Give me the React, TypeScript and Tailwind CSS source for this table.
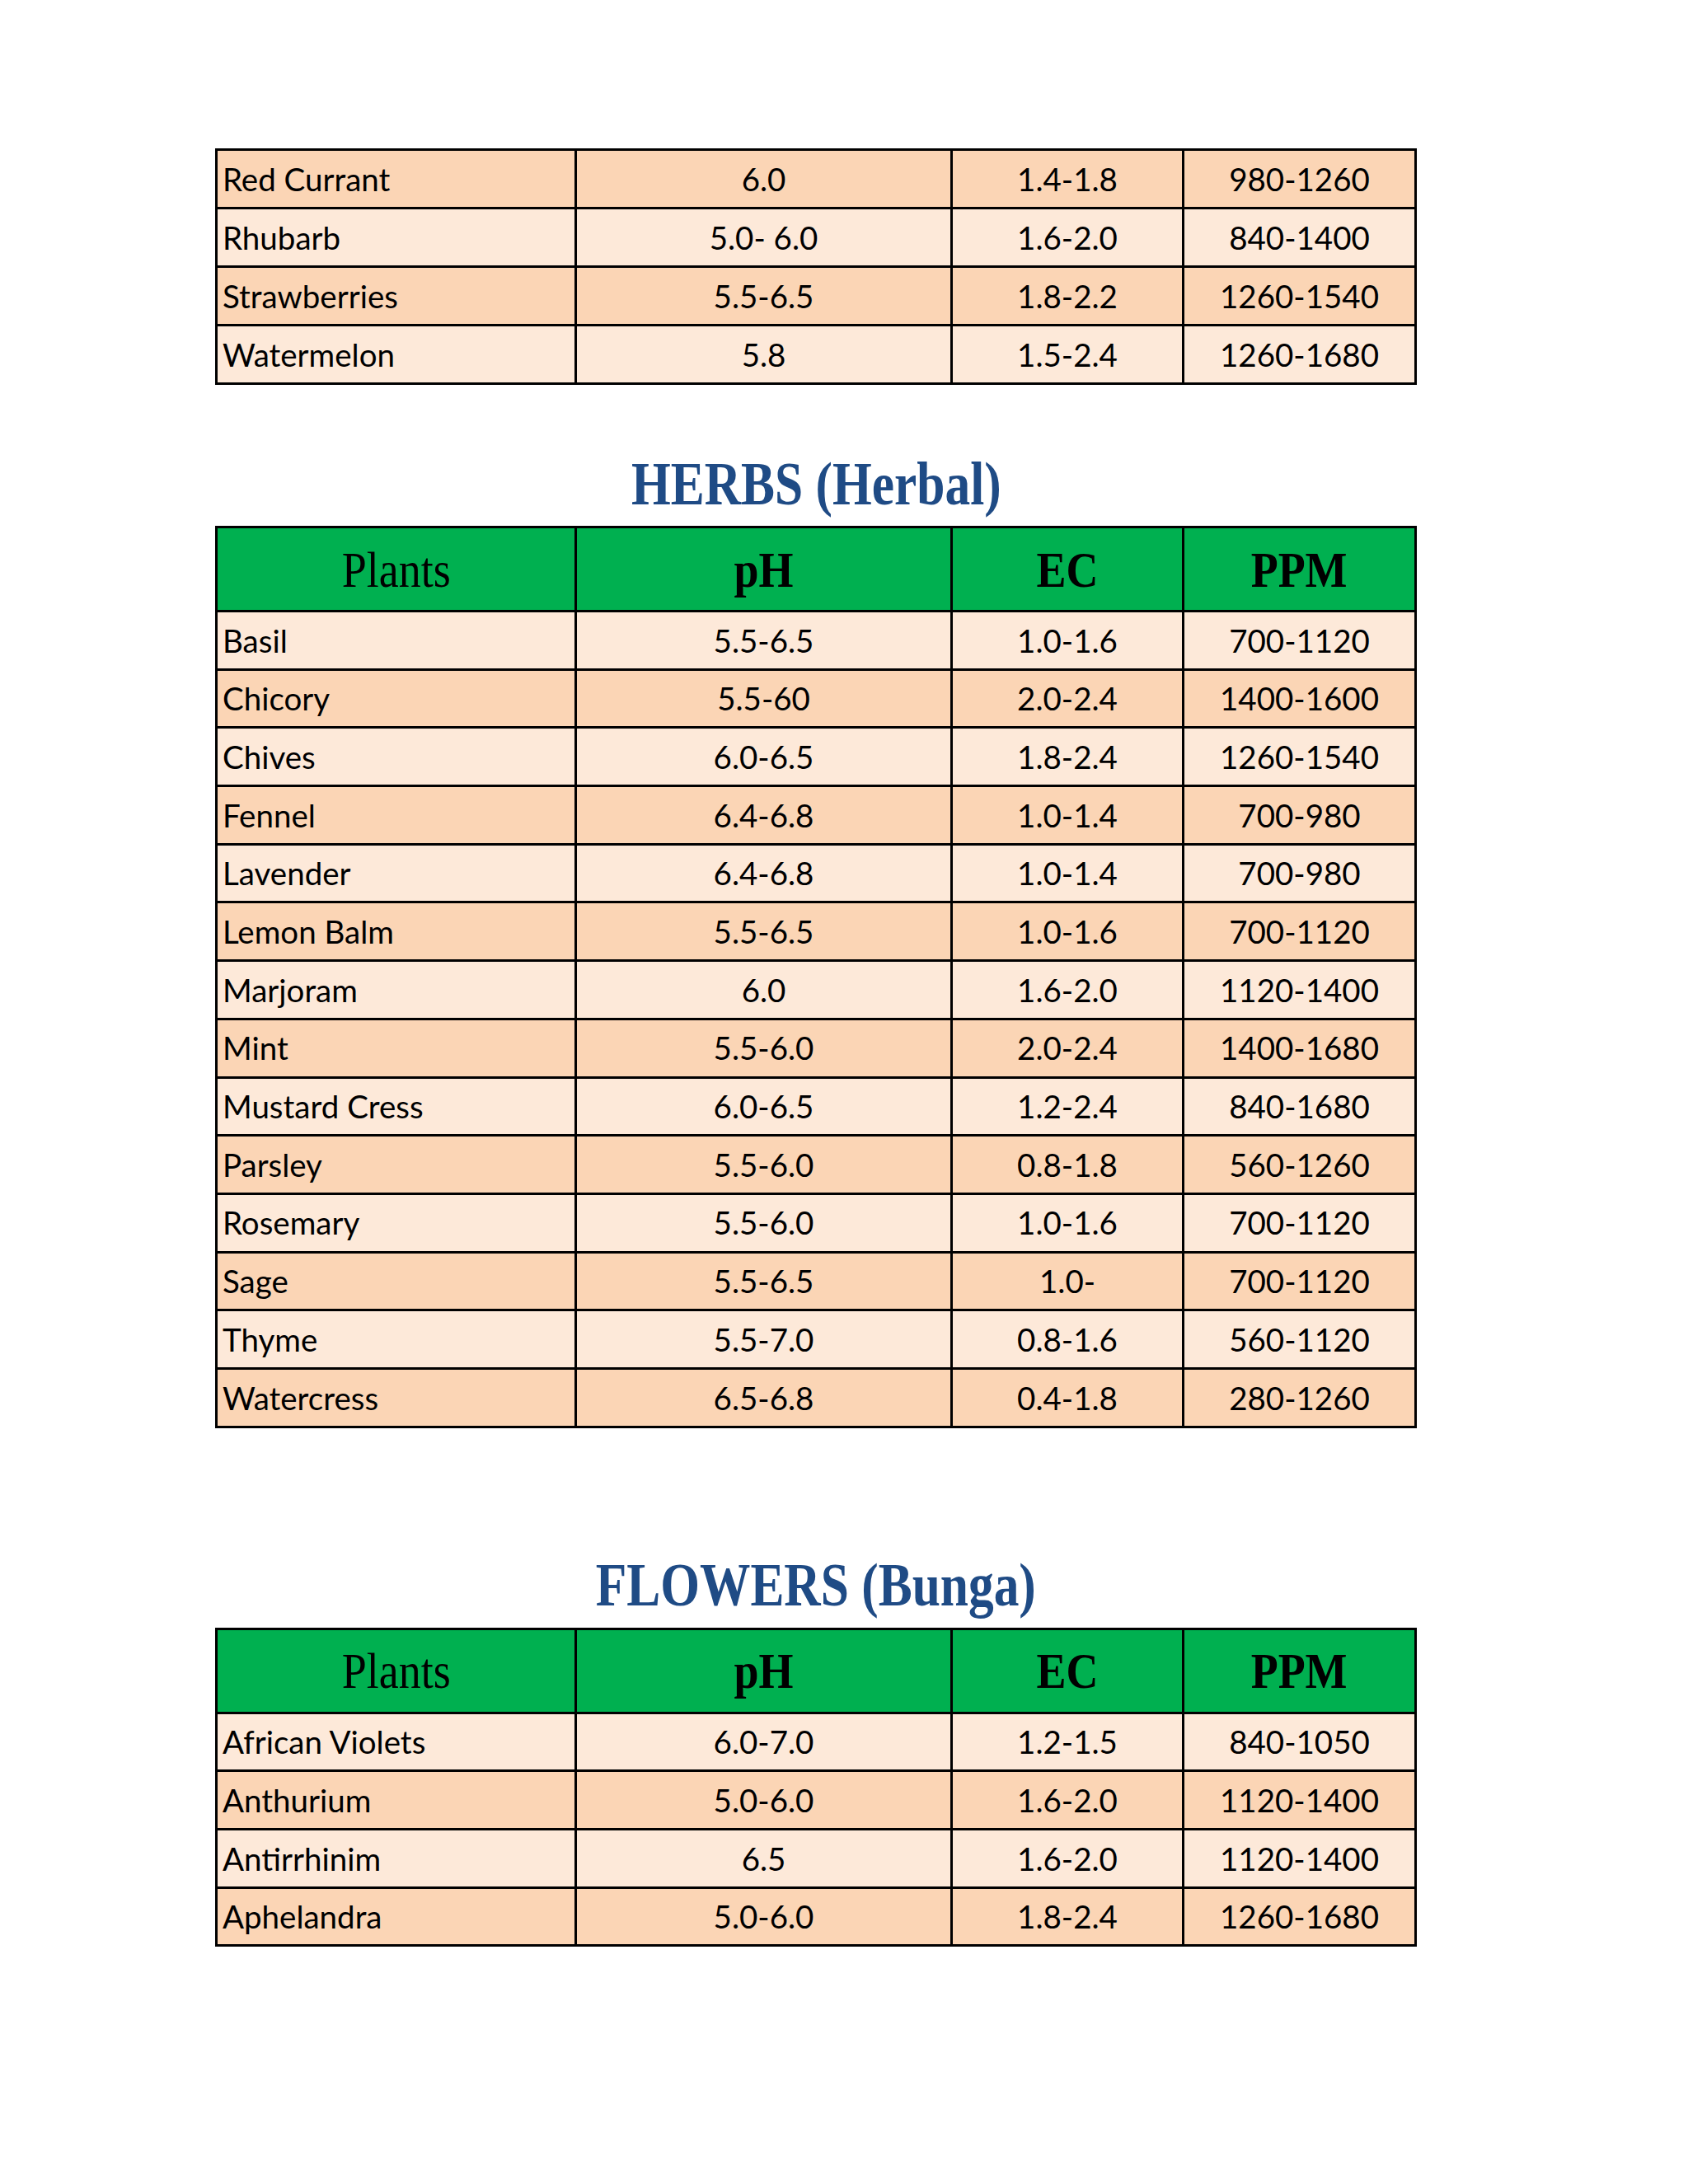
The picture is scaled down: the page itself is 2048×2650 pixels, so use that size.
import React from "react";

interface PlantRow {
  name: string;
  ph: string;
  ec: string;
  ppm: string;
}

const fruits: PlantRow[] = [
  { name: "Red Currant", ph: "6.0", ec: "1.4-1.8", ppm: "980-1260" },
  { name: "Rhubarb", ph: "5.0- 6.0", ec: "1.6-2.0", ppm: "840-1400" },
  { name: "Strawberries", ph: "5.5-6.5", ec: "1.8-2.2", ppm: "1260-1540" },
  { name: "Watermelon", ph: "5.8", ec: "1.5-2.4", ppm: "1260-1680" },
];

const herbs: PlantRow[] = [
  { name: "Basil", ph: "5.5-6.5", ec: "1.0-1.6", ppm: "700-1120" },
  { name: "Chicory", ph: "5.5-60", ec: "2.0-2.4", ppm: "1400-1600" },
  { name: "Chives", ph: "6.0-6.5", ec: "1.8-2.4", ppm: "1260-1540" },
  { name: "Fennel", ph: "6.4-6.8", ec: "1.0-1.4", ppm: "700-980" },
  { name: "Lavender", ph: "6.4-6.8", ec: "1.0-1.4", ppm: "700-980" },
  { name: "Lemon Balm", ph: "5.5-6.5", ec: "1.0-1.6", ppm: "700-1120" },
  { name: "Marjoram", ph: "6.0", ec: "1.6-2.0", ppm: "1120-1400" },
  { name: "Mint", ph: "5.5-6.0", ec: "2.0-2.4", ppm: "1400-1680" },
  { name: "Mustard Cress", ph: "6.0-6.5", ec: "1.2-2.4", ppm: "840-1680" },
  { name: "Parsley", ph: "5.5-6.0", ec: "0.8-1.8", ppm: "560-1260" },
  { name: "Rosemary", ph: "5.5-6.0", ec: "1.0-1.6", ppm: "700-1120" },
  { name: "Sage", ph: "5.5-6.5", ec: "1.0-", ppm: "700-1120" },
  { name: "Thyme", ph: "5.5-7.0", ec: "0.8-1.6", ppm: "560-1120" },
  { name: "Watercress", ph: "6.5-6.8", ec: "0.4-1.8", ppm: "280-1260" },
];

const flowers: PlantRow[] = [
  { name: "African Violets", ph: "6.0-7.0", ec: "1.2-1.5", ppm: "840-1050" },
  { name: "Anthurium", ph: "5.0-6.0", ec: "1.6-2.0", ppm: "1120-1400" },
  { name: "Antirrhinim", ph: "6.5", ec: "1.6-2.0", ppm: "1120-1400" },
  { name: "Aphelandra", ph: "5.0-6.0", ec: "1.8-2.4", ppm: "1260-1680" },
];

function HeaderCell({ label, bold = true }: { label: string; bold?: boolean }) {
  return (
    <div className="flex h-[99px] items-center justify-center bg-[#00b050] text-black">
      <span
        className={`inline-block scale-x-[0.87] text-[62px] leading-none [font-family:'Liberation_Serif',serif] ${
          bold ? "font-bold" : "font-normal"
        }`}
      >
        {label}
      </span>
    </div>
  );
}

function SectionTitle({ title }: { title: string }) {
  return (
    <div className="text-center text-[74px] leading-none font-bold text-[#1f4b85] [font-family:'Liberation_Serif',serif]">
      <span className="inline-block scale-x-[0.83]">{title}</span>
    </div>
  );
}

function PlantTable({
  rows,
  withHeader = false,
  startDark = false,
  rowHeight = "h-[68px]",
}: {
  rows: PlantRow[];
  withHeader?: boolean;
  startDark?: boolean;
  rowHeight?: string;
}) {
  return (
    <div className="grid w-fit grid-cols-[433px_453px_278px_279px] gap-[3px] bg-black p-[3px] text-[38.5px] text-black [font-family:Lato,sans-serif]">
      {withHeader && (
        <>
          <HeaderCell label="Plants" bold={false} />
          <HeaderCell label="pH" />
          <HeaderCell label="EC" />
          <HeaderCell label="PPM" />
        </>
      )}
      {rows.map((row, i) => {
        // alternate the two peach tones
        const dark = startDark ? i % 2 === 0 : i % 2 === 1;
        const bg = dark ? "bg-[#fbd5b5]" : "bg-[#fde9d9]";
        return (
          <React.Fragment key={row.name}>
            <div className={`flex ${rowHeight} items-center pl-[6px] leading-none ${bg}`}>{row.name}</div>
            <div className={`flex ${rowHeight} items-center justify-center leading-none ${bg}`}>{row.ph}</div>
            <div className={`flex ${rowHeight} items-center justify-center leading-none ${bg}`}>{row.ec}</div>
            <div className={`flex ${rowHeight} items-center justify-center leading-none ${bg}`}>{row.ppm}</div>
          </React.Fragment>
        );
      })}
    </div>
  );
}

export default function App() {
  return (
    <div className="min-h-[2650px] w-[2048px] bg-white pt-[180px] pl-[261px]">
      <div className="w-[1458px]">
        <PlantTable rows={fruits} startDark />

        <div className="mt-[83px]">
          <SectionTitle title="HERBS (Herbal)" />
        </div>
        <div className="mt-[14px]">
          <PlantTable rows={herbs} withHeader rowHeight="h-[67.7px]" />
        </div>

        <div className="mt-[153px]">
          <SectionTitle title="FLOWERS (Bunga)" />
        </div>
        <div className="mt-[15px]">
          <PlantTable rows={flowers} withHeader rowHeight="h-[67.7px]" />
        </div>
      </div>
    </div>
  );
}
